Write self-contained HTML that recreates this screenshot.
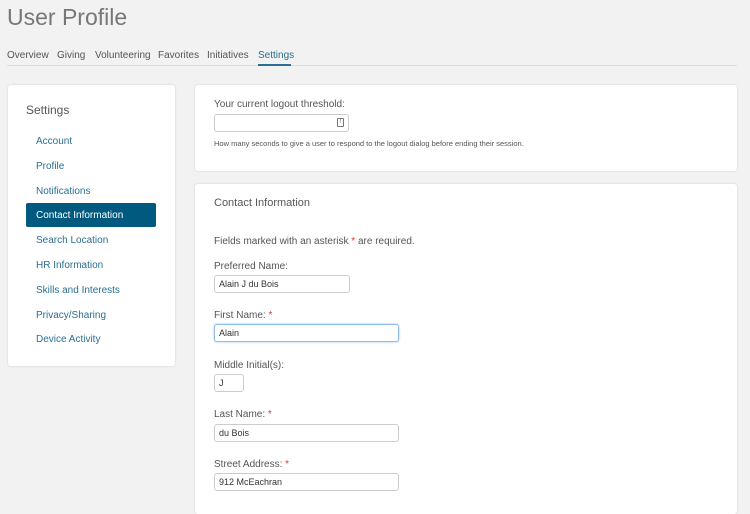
<!DOCTYPE html>
<html><head><style>
*{margin:0;padding:0;box-sizing:border-box}
body{width:750px;height:506px;overflow:hidden;background:#f2f2f2;font-family:"Liberation Sans",sans-serif;position:relative;color:#555}
.a{position:absolute;white-space:nowrap}
h1{position:absolute;left:7px;top:4px;font-size:23px;font-weight:normal;color:#777}
.tab{font-size:10px;color:#555;top:50px}
.line{left:7px;top:65px;width:730px;height:1px;background:#ddd}
.card{position:absolute;background:#fff;border-radius:3px;box-shadow:0 0 2px rgba(0,0,0,.15)}
.nav{font-size:10px;color:#2a6f93;left:36px}
.lbl{font-size:10px;color:#555;left:214px}
.inp{position:absolute;left:214px;height:18px;border:1px solid #ccc;border-radius:3px;background:#fff;font-size:9px;color:#333;padding:3px 0 0 4px}
.r{color:#d33}
</style></head><body>
<h1>User Profile</h1>
<div class="a tab" style="left:7px">Overview</div>
<div class="a tab" style="left:57px">Giving</div>
<div class="a tab" style="left:95px">Volunteering</div>
<div class="a tab" style="left:158px">Favorites</div>
<div class="a tab" style="left:207px">Initiatives</div>
<div class="a tab" style="left:258px;color:#2a6f93">Settings</div>
<div class="a line"></div>
<div class="a" style="left:258px;top:64px;width:33px;height:2px;background:#2a6f93"></div>

<div class="card" style="left:8px;top:85px;width:167px;height:281px"></div>
<div class="a" style="left:26px;top:103px;font-size:12px;color:#555">Settings</div>
<div class="a nav" style="top:136px">Account</div>
<div class="a nav" style="top:161px">Profile</div>
<div class="a nav" style="top:186px">Notifications</div>
<div class="a" style="left:26px;top:203px;width:130px;height:24px;background:#005a80;border-radius:2px"></div>
<div class="a nav" style="top:210px;color:#fff">Contact Information</div>
<div class="a nav" style="top:235px">Search Location</div>
<div class="a nav" style="top:260px">HR Information</div>
<div class="a nav" style="top:285px">Skills and Interests</div>
<div class="a nav" style="top:310px">Privacy/Sharing</div>
<div class="a nav" style="top:334px">Device Activity</div>

<div class="card" style="left:195px;top:85px;width:542px;height:86px"></div>
<div class="a lbl" style="top:99px">Your current logout threshold:</div>
<div class="inp" style="top:114px;width:135px"></div>
<div class="a" style="left:337px;top:118px;width:7px;height:9px;border:1px solid #777;border-radius:1px;font-size:6px;text-align:center;line-height:7px;color:#555">!</div>
<div class="a" style="left:214px;top:139px;font-size:7.5px;color:#555">How many seconds to give a user to respond to the logout dialog before ending their session.</div>

<div class="card" style="left:195px;top:184px;width:542px;height:330px"></div>
<div class="a" style="left:214px;top:197px;font-size:11px;color:#555">Contact Information</div>
<div class="a lbl" style="top:236px">Fields marked with an asterisk <span class="r">*</span> are required.</div>
<div class="a lbl" style="top:261px">Preferred Name:</div>
<div class="inp" style="top:275px;width:136px">Alain J du Bois</div>
<div class="a lbl" style="top:310px">First Name: <span class="r">*</span></div>
<div class="inp" style="top:324px;width:185px;border-color:#8fbde8;box-shadow:0 0 2px #9cc6ee">Alain</div>
<div class="a lbl" style="top:360px">Middle Initial(s):</div>
<div class="inp" style="top:374px;width:30px">J</div>
<div class="a lbl" style="top:409px">Last Name: <span class="r">*</span></div>
<div class="inp" style="top:424px;width:185px">du Bois</div>
<div class="a lbl" style="top:459px">Street Address: <span class="r">*</span></div>
<div class="inp" style="top:473px;width:185px">912 McEachran</div>
</body></html>
